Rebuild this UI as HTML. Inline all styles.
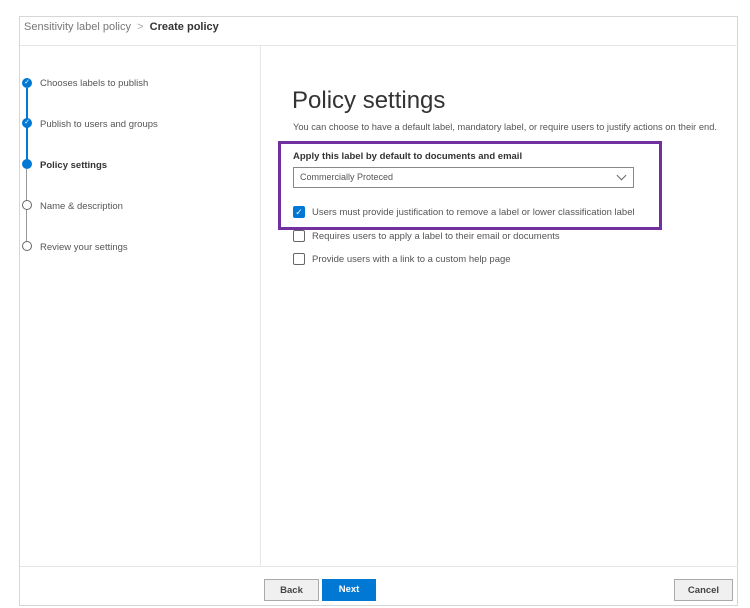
<!DOCTYPE html>
<html><head><style>
body{margin:0;width:750px;height:608px;background:#fff;font-family:"Liberation Sans",sans-serif;position:relative;overflow:hidden;color:#333}
.a{position:absolute}
.frame{left:19px;top:16px;width:719px;height:590px;border:1px solid #d6d6d6;box-sizing:border-box}
.t{font-size:9.5px;color:#555;white-space:nowrap}
.dot{width:10px;height:10px;border-radius:50%;box-sizing:border-box}
.cb{width:12px;height:12px;border:1px solid #666;border-radius:2px;box-sizing:border-box;background:#fff}
.btn{height:22px;font-size:9.5px;font-weight:bold;text-align:center;line-height:22px;box-sizing:border-box}
</style></head><body>
<div class="a frame"></div>
<div class="a t" style="left:24px;top:21px;font-size:11px;color:#777">Sensitivity label policy &nbsp;<span style="color:#aaa">&gt;</span>&nbsp; <b style="color:#333">Create policy</b></div>
<div class="a" style="left:20px;top:45px;width:718px;height:1px;background:#e6e6e6"></div>
<div class="a" style="left:260px;top:46px;width:1px;height:520px;background:#e6e6e6"></div>
<div class="a" style="left:20px;top:566px;width:718px;height:1px;background:#e6e6e6"></div>

<div class="a" style="left:26px;top:88px;width:1.5px;height:72px;background:#0078d4"></div>
<div class="a" style="left:26px;top:169px;width:1px;height:73px;background:#999"></div>
<div class="a dot" style="left:22px;top:78px;background:#0078d4;color:#fff;font-size:7px;text-align:center;line-height:10px">✓</div>
<div class="a dot" style="left:22px;top:118px;background:#0078d4;color:#fff;font-size:7px;text-align:center;line-height:10px">✓</div>
<div class="a dot" style="left:22px;top:159px;background:#0078d4"></div>
<div class="a dot" style="left:22px;top:200px;border:1px solid #666;background:#fff"></div>
<div class="a dot" style="left:22px;top:241px;border:1px solid #666;background:#fff"></div>
<div class="a t" style="left:40px;top:78px">Chooses labels to publish</div>
<div class="a t" style="left:40px;top:119px">Publish to users and groups</div>
<div class="a t" style="left:40px;top:160px;font-weight:bold;color:#333">Policy settings</div>
<div class="a t" style="left:40px;top:201px">Name &amp; description</div>
<div class="a t" style="left:40px;top:242px">Review your settings</div>

<div class="a" style="left:292px;top:87px;font-size:24px;color:#333">Policy settings</div>
<div class="a t" style="left:293px;top:122px;font-size:9.3px">You can choose to have a default label, mandatory label, or require users to justify actions on their end.</div>
<div class="a" style="left:278px;top:141px;width:384px;height:89px;border:3px solid #7030a0;box-sizing:border-box"></div>
<div class="a t" style="left:293px;top:151px;font-weight:bold;color:#333">Apply this label by default to documents and email</div>
<div class="a" style="left:293px;top:167px;width:341px;height:21px;border:1px solid #888;box-sizing:border-box"></div>
<div class="a t" style="left:300px;top:172px;font-size:9px">Commercially Proteced</div>
<div class="a" style="left:618px;top:172px;width:6px;height:6px;border-right:1px solid #666;border-bottom:1px solid #666;transform:rotate(45deg)"></div>
<div class="a cb" style="left:293px;top:206px;background:#0078d4;border-color:#0078d4;color:#fff;font-size:9px;text-align:center;line-height:11px">✓</div>
<div class="a t" style="left:312px;top:207px">Users must provide justification to remove a label or lower classification label</div>
<div class="a cb" style="left:293px;top:230px"></div>
<div class="a t" style="left:312px;top:231px">Requires users to apply a label to their email or documents</div>
<div class="a cb" style="left:293px;top:253px"></div>
<div class="a t" style="left:312px;top:254px">Provide users with a link to a custom help page</div>

<div class="a btn" style="left:264px;top:579px;width:55px;background:#f0f0f0;border:1px solid #aaa;color:#444">Back</div>
<div class="a btn" style="left:322px;top:579px;width:54px;background:#0078d4;color:#fff">Next</div>
<div class="a btn" style="left:674px;top:579px;width:59px;background:#f0f0f0;border:1px solid #aaa;color:#444">Cancel</div>
</body></html>
